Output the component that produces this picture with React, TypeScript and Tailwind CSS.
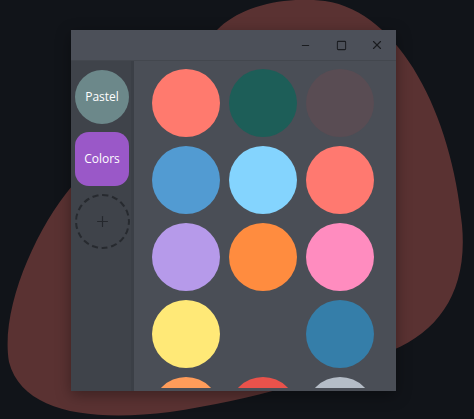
import { Minus, Square, X, Plus } from "lucide-react";

const swatches = [
  "#ff7a6e", "#1d5e58", "#594c53",
  "#529bd2", "#84d4fe", "#ff7970",
  "#b69aea", "#ff8c3f", "#ff8cbf",
  "#ffe977", "", "#357ea9",
  "#ff9c5a", "#e9524b", "#b5bdc7",
];

export default function App() {
  return (
    <div className="relative w-[474px] h-[419px] overflow-hidden bg-[#111419] font-['Open_Sans',sans-serif]">
      {/* blob */}
      <svg className="absolute inset-0" width="474" height="419" viewBox="0 0 474 419">
        <path
          d="M 217 30 C 240 6, 285 -4, 325 1 C 400 12, 452 115, 462 225 C 468 290, 440 330, 393 350 C 330 378, 250 400, 170 412 C 90 422, 22 412, 9 362 C 0 310, 35 230, 72 186 C 120 128, 185 62, 217 30 Z"
          fill="#5a3232"
        />
      </svg>

      {/* window */}
      <div className="absolute left-[71px] top-[30px] w-[325px] h-[361px] flex flex-col bg-[#4a4e56] shadow-[0_4px_14px_rgba(0,0,0,0.35)] overflow-hidden">
        <div className="h-[31px] shrink-0 flex items-center justify-end bg-[#4c5059] border-b border-[#43474e] text-[#1a1c20]">
          <div className="w-[36px] flex justify-center">
            <Minus size={11} strokeWidth={2.2} />
          </div>
          <div className="w-[36px] flex justify-center">
            <Square size={11} strokeWidth={2.2} />
          </div>
          <div className="w-[36px] flex justify-center mr-[1px]">
            <X size={14} strokeWidth={2} />
          </div>
        </div>

        <div className="flex flex-1 min-h-0">
          <div className="w-[63px] shrink-0 bg-[#3f434a] border-r-[3px] border-[#3b3f46] flex flex-col items-center gap-[8px] pt-[9px] pl-[2px]">
            <div className="w-[54px] h-[54px] rounded-full bg-[#6c888a] flex items-center justify-center text-white text-[12px] font-medium">
              Pastel
            </div>
            <div className="w-[54px] h-[54px] rounded-[14px] bg-[#9a58c8] flex items-center justify-center text-white text-[12px] font-medium">
              Colors
            </div>
            <div className="w-[55px] h-[55px] rounded-full border-2 border-dashed border-[#272a2f] flex items-center justify-center text-[#25282d]">
              <Plus size={17} strokeWidth={1.6} />
            </div>
          </div>

          <div className="flex-1 overflow-hidden pl-[18px] pt-[8px] pb-[3px]">
            <div className="h-full overflow-hidden">
              <div className="grid grid-cols-[68px_68px_68px] gap-x-[9px] gap-y-[9px]">
                {swatches.map((c, i) => (
                  <div
                    key={i}
                    className="w-[68px] h-[68px] rounded-full"
                    style={{ backgroundColor: c || "transparent" }}
                  />
                ))}
              </div>
            </div>
          </div>
        </div>
      </div>
    </div>
  );
}
